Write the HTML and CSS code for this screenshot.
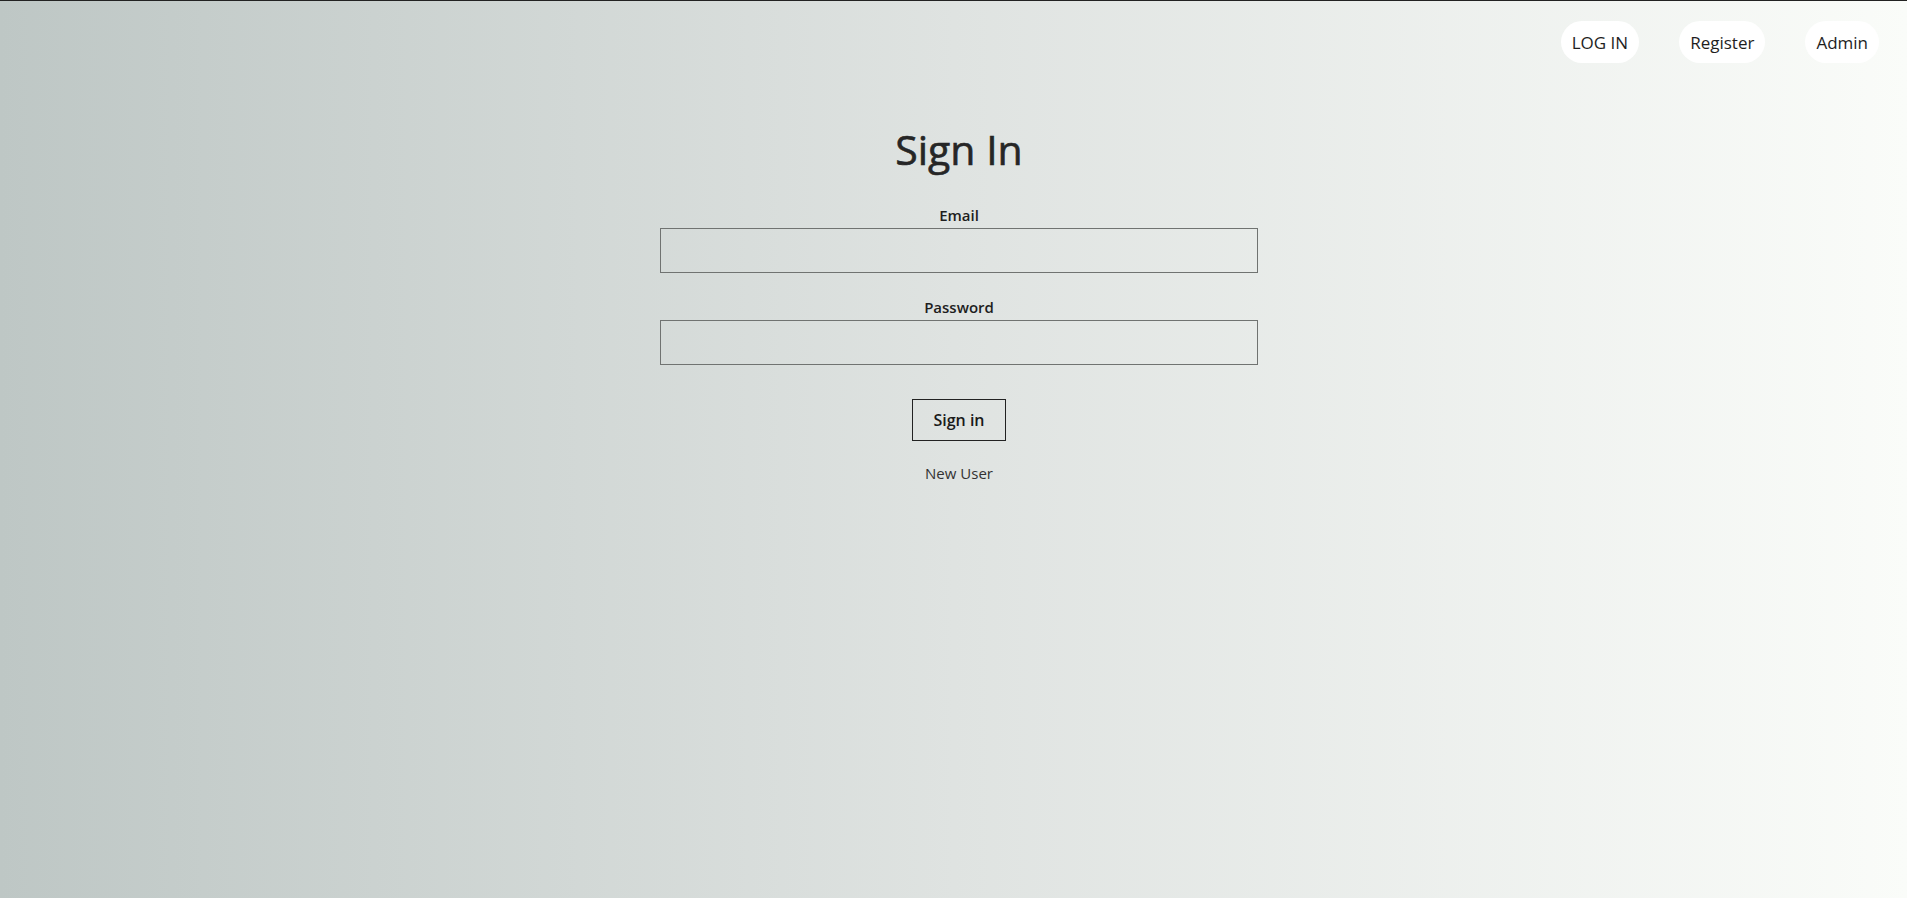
FILE: index.html
```html
<!DOCTYPE html>
<html lang="en">
<head>
<meta charset="utf-8">
<title>Sign In</title>
<link rel="stylesheet" href="styles.css">
</head>
<body>
<header class="nav">
  <a class="pill" href="#">LOG IN</a>
  <a class="pill" href="#">Register</a>
  <a class="pill" href="#">Admin</a>
</header>
<main class="signin">
  <h1 class="title">Sign In</h1>
  <form class="form">
    <label class="label" for="email">Email</label>
    <input class="field" id="email" type="email">
    <label class="label label-gap" for="password">Password</label>
    <input class="field" id="password" type="password">
    <button class="btn" type="button">Sign in</button>
    <a class="link" href="#">New User</a>
  </form>
</main>
</body>
</html>
```
FILE: styles.css
```css
html, body {
  height: 100%;
}
body {
  margin: 0;
  box-sizing: border-box;
  border-top: 1px solid #222;
  background: linear-gradient(90deg, #bec7c5 0%, #dfe3e1 50%, #fafcf9 100%);
  font-family: "Open Sans", "Noto Sans", sans-serif;
  color: #222;
}
.nav {
  display: flex;
  justify-content: flex-end;
  gap: 40px;
  padding: 20px 28px 0 0;
}
.pill {
  display: flex;
  align-items: center;
  height: 42px;
  padding: 0 11px;
  border-radius: 21px;
  background: #fff;
  color: #1e1e1e;
  font-size: 17px;
  text-decoration: none;
}
.signin {
  display: flex;
  flex-direction: column;
  align-items: center;
  padding-left: 11px;
  margin-top: 58px;
}
.title {
  margin: 0;
  font-size: 41px;
  font-weight: 400;
  -webkit-text-stroke: 0.6px #262626;
  line-height: 56px;
  color: #262626;
}
.form {
  display: flex;
  flex-direction: column;
  align-items: center;
  width: 598px;
  margin-top: 28px;
}
.label {
  font-size: 15px;
  font-weight: 600;
  line-height: 20px;
  margin-bottom: 3px;
  color: #1e1e1e;
}
.label-gap {
  margin-top: 24px;
}
.field {
  box-sizing: border-box;
  width: 598px;
  height: 45px;
  border: 1px solid #707371;
  background: transparent;
  margin: 0;
}
.btn {
  margin-top: 34px;
  height: 42px;
  padding: 0 20px;
  border: 1px solid #222;
  background: transparent;
  font-family: "Open Sans", "Noto Sans", sans-serif;
  font-size: 16px;
  font-weight: 600;
  color: #1a1a1a;
}
.link {
  margin-top: 22px;
  font-size: 15px;
  line-height: 20px;
  color: #333;
  text-decoration: none;
}
```
